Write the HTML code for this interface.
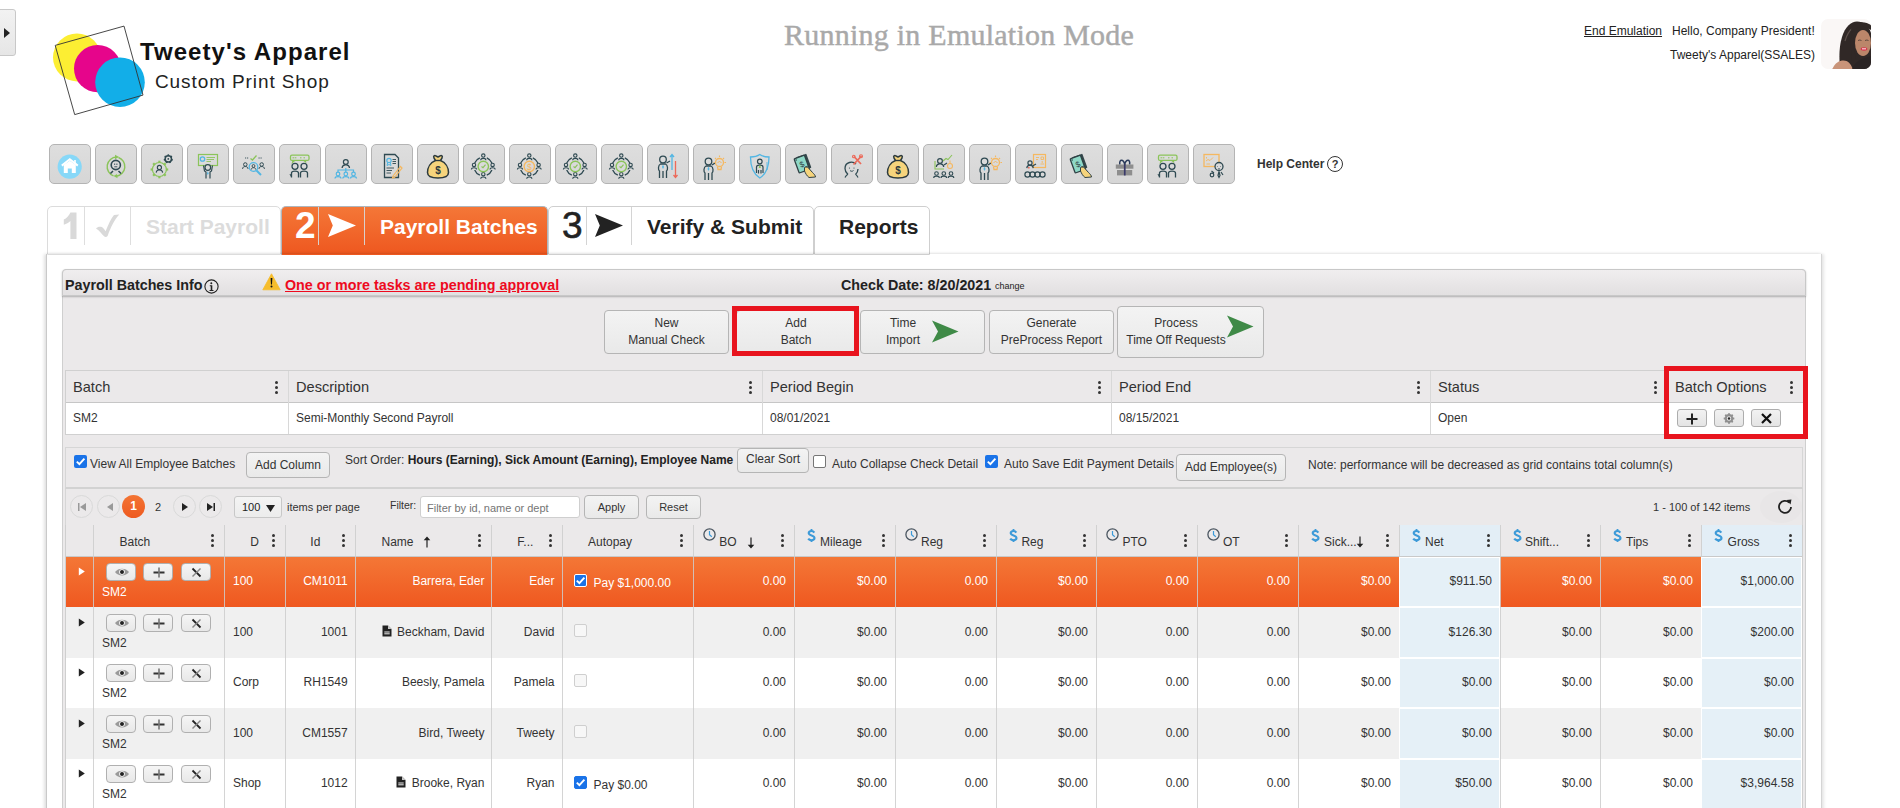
<!DOCTYPE html>
<html><head><meta charset="utf-8">
<style>
*{box-sizing:border-box;margin:0;padding:0}
html,body{width:1900px;height:808px;overflow:hidden;background:#fff;font-family:"Liberation Sans",sans-serif;color:#333;position:relative}
.a{position:absolute}
.t{white-space:nowrap;position:absolute}
/* toggle */
#tog{left:-3px;top:9px;width:19px;height:47px;border:1px solid #c8c8c8;border-radius:0 3px 3px 0;background:linear-gradient(#f2f2f2,#e6e6e6)}
#tog:after{content:"";position:absolute;left:6px;top:18px;border-left:6px solid #222;border-top:5px solid transparent;border-bottom:5px solid transparent}
/* icon bar */
.ib{position:absolute;top:144px;width:42px;height:40px;border:1px solid #b4b4b4;border-radius:5px;background:linear-gradient(#dedede,#d6d6d6)}

/* tabs */
.tab{position:absolute;top:206px;height:49px;border:1px solid #d0d0d0;border-radius:5px 5px 0 0;background:#fff}
.tab .sep{position:absolute;top:0;width:1px;height:38px;background:#d8d8d8}
/* container */
#cont{left:46px;top:254px;width:1776px;height:600px;border-left:1px solid #c9c9c9;border-right:1px solid #d5d5d5;box-shadow:-2px 0 3px rgba(0,0,0,.12),2px 0 3px rgba(0,0,0,.10)}
#panel{left:62px;top:269px;width:1744px;height:600px;background:#ebe9ea;border:1px solid #cfcfcf;border-radius:4px 4px 0 0}
#phead{left:62px;top:269px;width:1744px;height:27px;background:linear-gradient(#f0eeef,#e2e0e1);border:1px solid #c8c8c8;border-radius:4px 4px 0 0;box-shadow:0 1px 2px rgba(0,0,0,.25)}
.btn{position:absolute;border:1px solid #b5b5b5;border-radius:4px;background:linear-gradient(#f3f3f3,#e9e9e9);font-size:12px;color:#333;text-align:center;line-height:17px}
.grid{position:absolute;background:#fff;border:1px solid #cfcfcf}
.gh{position:absolute;background:#ebe9ea;border-bottom:1px solid #c4c4c4}
.kb{position:absolute;width:3px}
.kb i{display:block;width:3px;height:3px;border-radius:50%;background:#333;margin-bottom:2px}
</style></head><body>
<div id="tog" class="a"></div>

<!-- logo -->
<svg class="a" style="left:0;top:0" width="400" height="130" viewBox="0 0 400 130">
  <circle cx="77" cy="57.4" r="24" fill="#fcee33"/>
  <circle cx="97.6" cy="68.6" r="23.6" fill="#e6058b"/>
  <circle cx="120" cy="82.2" r="24.8" fill="#12aee8"/>
  <polygon points="55.2,45.4 124,26.1 143,95.1 74.7,114.6" fill="none" stroke="#333" stroke-width="0.9"/>
</svg>
<div class="t" style="left:140px;top:38px;font-size:24px;font-weight:bold;color:#111;letter-spacing:1.05px">Tweety's Apparel</div>
<div class="t" style="left:155px;top:71px;font-size:19px;color:#222;letter-spacing:0.9px">Custom Print Shop</div>

<div class="t" style="left:784px;top:18px;font-size:30px;font-family:'Liberation Serif',serif;color:#a9a9a9;letter-spacing:0.24px;-webkit-text-stroke:0.45px #a9a9a9">Running in Emulation Mode</div>

<div class="t" style="left:1584px;top:24px;font-size:12px;color:#222;text-decoration:underline">End Emulation</div>
<div class="t" style="left:1672px;top:24px;font-size:12px;color:#222">Hello, Company President!</div>
<div class="t" style="left:1670px;top:48px;font-size:12px;color:#222">Tweety's Apparel(SSALES)</div>
<svg class="a" style="left:1821px;top:19px" width="50" height="50" viewBox="0 0 50 50"><defs><clipPath id="avc"><rect x="0" y="0" width="50" height="50" rx="7"/></clipPath></defs><g clip-path="url(#avc)">
<rect width="50" height="50" fill="#faf7f6"/>
<path d="M19,50 C18,38 18,28 21,18 C24,8 30,2.5 36,2.5 C43,2.5 49,8 50.5,16 L50.5,50 Z" fill="#302826"/>
<path d="M24,22 C26,15 29,11 32,9" fill="none" stroke="#5a4e4a" stroke-width="1.2"/>
<ellipse cx="42" cy="24" rx="8" ry="13" fill="#bb866a"/>
<path d="M31,14 C34,7 44,5 51,12 L51,7 C45,1 33,2 30,10 Z" fill="#302826"/>
<path d="M31,12 C33,20 33,32 35,40 L31,42 C30,32 29,20 31,12 Z" fill="#302826"/>
<ellipse cx="43" cy="30" rx="3.3" ry="1.7" fill="#d8344c"/>
<rect x="41" y="29.4" width="4" height="0.9" fill="#fff"/>
<path d="M37,21.5 Q39,20.5 40.5,21.5 M44,21.5 Q46,20.5 47.5,21.5" fill="none" stroke="#4a3a34" stroke-width="0.8"/>
<path d="M11,50.5 C14,44 18,41.5 22.5,41.5 C27,41.5 30,45 32,50.5 Z" fill="#c99479"/>
<path d="M31,50.5 C33,44 38,40 50.5,37 L50.5,50.5 Z" fill="#2a2424"/>
</g></svg>

<!-- ICONS -->
<div id="icons">
<div class="ib" style="left:49px;width:42px"><svg class="a" style="left:-1px;top:-1px;overflow:visible" width="42" height="40" viewBox="0 0 42 40"><circle cx="20.7" cy="22.7" r="12.1" fill="#87d8f8"/><path d="M12.8,21.6 L20.8,15.3 L28.8,21.6" fill="none" stroke="#fff" stroke-width="2"/><path d="M14.8,21 L20.8,16.8 L26.8,21 L26.8,28.9 L22.8,28.9 L22.8,24.5 L18.8,24.5 L18.8,28.9 L14.8,28.9 Z" fill="#fff"/><rect x="25.2" y="16" width="1.6" height="3.5" fill="#fff"/></svg></div>
<div class="ib" style="left:95px;width:42px"><svg class="a" style="left:-1px;top:-1px;overflow:visible" width="42" height="40" viewBox="0 0 42 40"><path d="M21.5,13 A9.7,9.7 0 0 0 18.5,31.8" fill="none" stroke="#8bc45a" stroke-width="1.4"/><path d="M23.5,13.5 A9.7,9.7 0 0 1 21.5,32.2" fill="none" stroke="#8bc45a" stroke-width="1.4"/><path d="M20,10.8 L24,13 L20,15.2 Z" fill="#8bc45a"/><path d="M22,30 L18.5,32 L22.5,34.2 Z" fill="#8bc45a"/><circle cx="20.8" cy="21" r="4.6" fill="none" stroke="#2f4a52" stroke-width="1.6"/><path d="M15.5,29.5 L18,27 M26,29.5 L23.5,27" stroke="#2f4a52" stroke-width="1.5"/><path d="M19.7,19.5 V21 M21.9,19.5 V21 M19.3,22.8 H22.3" stroke="#2f4a52" stroke-width="0.9"/></svg></div>
<div class="ib" style="left:141px;width:42px"><svg class="a" style="left:-1px;top:-1px;overflow:visible" width="42" height="40" viewBox="0 0 42 40"><circle cx="18.4" cy="25.5" r="7" fill="none" stroke="#8bc45a" stroke-width="1.2"/><rect x="17.299999999999997" y="16.7" width="2.2" height="2.3" fill="#8bc45a" transform="rotate(0.0 18.4 25.5)"/><rect x="17.299999999999997" y="16.7" width="2.2" height="2.3" fill="#8bc45a" transform="rotate(45.0 18.4 25.5)"/><rect x="17.299999999999997" y="16.7" width="2.2" height="2.3" fill="#8bc45a" transform="rotate(90.0 18.4 25.5)"/><rect x="17.299999999999997" y="16.7" width="2.2" height="2.3" fill="#8bc45a" transform="rotate(135.0 18.4 25.5)"/><rect x="17.299999999999997" y="16.7" width="2.2" height="2.3" fill="#8bc45a" transform="rotate(180.0 18.4 25.5)"/><rect x="17.299999999999997" y="16.7" width="2.2" height="2.3" fill="#8bc45a" transform="rotate(225.0 18.4 25.5)"/><rect x="17.299999999999997" y="16.7" width="2.2" height="2.3" fill="#8bc45a" transform="rotate(270.0 18.4 25.5)"/><rect x="17.299999999999997" y="16.7" width="2.2" height="2.3" fill="#8bc45a" transform="rotate(315.0 18.4 25.5)"/><circle cx="27.3" cy="14.9" r="3.2" fill="none" stroke="#2f4a52" stroke-width="1.5"/><rect x="26.55" y="10.299999999999999" width="1.5" height="1.9" fill="#2f4a52" transform="rotate(0.0 27.3 14.9)"/><rect x="26.55" y="10.299999999999999" width="1.5" height="1.9" fill="#2f4a52" transform="rotate(51.42857142857143 27.3 14.9)"/><rect x="26.55" y="10.299999999999999" width="1.5" height="1.9" fill="#2f4a52" transform="rotate(102.85714285714286 27.3 14.9)"/><rect x="26.55" y="10.299999999999999" width="1.5" height="1.9" fill="#2f4a52" transform="rotate(154.28571428571428 27.3 14.9)"/><rect x="26.55" y="10.299999999999999" width="1.5" height="1.9" fill="#2f4a52" transform="rotate(205.71428571428572 27.3 14.9)"/><rect x="26.55" y="10.299999999999999" width="1.5" height="1.9" fill="#2f4a52" transform="rotate(257.14285714285717 27.3 14.9)"/><rect x="26.55" y="10.299999999999999" width="1.5" height="1.9" fill="#2f4a52" transform="rotate(308.57142857142856 27.3 14.9)"/><circle cx="27.3" cy="14.9" r="0.9" fill="#2f4a52"/><circle cx="18.4" cy="23.5" r="2.08" fill="none" stroke="#2f4a52" stroke-width="1.1"/><path d="M15.149999999999999,28.7 C15.474999999999998,26.425 16.775,25.775 18.4,25.97 C20.025,25.775 21.325,26.425 21.65,28.7" fill="none" stroke="#2f4a52" stroke-width="1.1"/></svg></div>
<div class="ib" style="left:187px;width:42px"><svg class="a" style="left:-1px;top:-1px;overflow:visible" width="42" height="40" viewBox="0 0 42 40"><rect x="11.5" y="10.5" width="19" height="11" fill="none" stroke="#8bc45a" stroke-width="1.2"/><circle cx="15.5" cy="15" r="2.2" fill="none" stroke="#52b6e3" stroke-width="1.3"/><path d="M19.5,13.5 H28 M19.5,15.5 H27 M19.5,17.5 H24" stroke="#8bc45a" stroke-width="0.9"/><circle cx="20.8" cy="23.5" r="2.8" fill="#d9d9d9" stroke="#2f4a52" stroke-width="1.2"/><path d="M16.5,21.5 L17.5,27 L19,28 L19,34.5 M23,34.5 L23,28 L24.5,27 L25.5,21.5" fill="none" stroke="#2f4a52" stroke-width="1.2"/><path d="M20.8,27 L21.6,29.5 L20.8,31 L20,29.5 Z" fill="#52b6e3"/></svg></div>
<div class="ib" style="left:233px;width:42px"><svg class="a" style="left:-1px;top:-1px;overflow:visible" width="42" height="40" viewBox="0 0 42 40"><path d="M12,14 H16 M25.5,14 H29.5" stroke="#2f4a52" stroke-width="0.9" stroke-dasharray="1.2 0.8"/><path d="M17.5,14.5 L19.5,16 L23.5,11.5" fill="none" stroke="#8bc45a" stroke-width="1.3"/><circle cx="12.3" cy="20.5" r="1.7600000000000002" fill="none" stroke="#2f4a52" stroke-width="1.0"/><path d="M9.55,24.9 C9.825000000000001,22.975 10.925,22.425 12.3,22.59 C13.675,22.425 14.775,22.975 15.05,24.9" fill="none" stroke="#2f4a52" stroke-width="1.0"/><circle cx="28.7" cy="20.5" r="1.7600000000000002" fill="none" stroke="#2f4a52" stroke-width="1.0"/><path d="M25.95,24.9 C26.224999999999998,22.975 27.325,22.425 28.7,22.59 C30.075,22.425 31.175,22.975 31.45,24.9" fill="none" stroke="#2f4a52" stroke-width="1.0"/><circle cx="20.5" cy="23" r="4.3" fill="none" stroke="#52b6e3" stroke-width="1.3"/><circle cx="20.5" cy="22" r="1.4400000000000002" fill="none" stroke="#2f4a52" stroke-width="0.9"/><path d="M18.25,25.6 C18.475,24.025 19.375,23.575 20.5,23.71 C21.625,23.575 22.525,24.025 22.75,25.6" fill="none" stroke="#2f4a52" stroke-width="0.9"/><path d="M23.5,26.5 L28,31" stroke="#52b6e3" stroke-width="2"/></svg></div>
<div class="ib" style="left:279px;width:42px"><svg class="a" style="left:-1px;top:-1px;overflow:visible" width="42" height="40" viewBox="0 0 42 40"><rect x="11.5" y="11.2" width="18.5" height="5.2" rx="1.5" fill="none" stroke="#8bc45a" stroke-width="1.3"/><path d="M14,16.4 L13.5,18.4 L16,16.4 M26,16.4 L27,18.4 L24.5,16.4" fill="none" stroke="#8bc45a" stroke-width="1.2"/><path d="M13.5,13.8 H18 M21,13.8 H23 M24.5,13.8 H26.5" stroke="#8bc45a" stroke-width="1" stroke-dasharray="1.5 0.6"/><circle cx="16" cy="22.3" r="3" fill="none" stroke="#2f4a52" stroke-width="1.3"/><circle cx="25" cy="22.3" r="3" fill="none" stroke="#2f4a52" stroke-width="1.3"/><path d="M12.5,33.5 V29 C12.5,26.5 19.5,26.5 19.5,29 V33.5 M21.5,33.5 V29 C21.5,26.5 28.5,26.5 28.5,29 V33.5" fill="none" stroke="#2f4a52" stroke-width="1.3"/><path d="M11,30 L12.5,33" stroke="#2f4a52" stroke-width="1"/></svg></div>
<div class="ib" style="left:325px;width:42px"><svg class="a" style="left:-1px;top:-1px;overflow:visible" width="42" height="40" viewBox="0 0 42 40"><circle cx="20.8" cy="18" r="2.4000000000000004" fill="none" stroke="#2f4a52" stroke-width="1.2"/><path d="M17.05,24.0 C17.425,21.375 18.925,20.625 20.8,20.85 C22.675,20.625 24.175,21.375 24.55,24.0" fill="none" stroke="#2f4a52" stroke-width="1.2"/><path d="M20.8,24 V25.5 M13,28 V26 H28.5 V28 M20.8,26 V28" fill="none" stroke="#52b6e3" stroke-width="1.2"/><circle cx="13" cy="30" r="1.8" fill="none" stroke="#52b6e3" stroke-width="1.2"/><path d="M10,34.5 C10,32 16,32 16,34.5" fill="none" stroke="#52b6e3" stroke-width="1.2"/><circle cx="20.8" cy="30" r="1.8" fill="none" stroke="#52b6e3" stroke-width="1.2"/><path d="M17.8,34.5 C17.8,32 23.8,32 23.8,34.5" fill="none" stroke="#52b6e3" stroke-width="1.2"/><circle cx="28.5" cy="30" r="1.8" fill="none" stroke="#52b6e3" stroke-width="1.2"/><path d="M25.5,34.5 C25.5,32 31.5,32 31.5,34.5" fill="none" stroke="#52b6e3" stroke-width="1.2"/></svg></div>
<div class="ib" style="left:371px;width:42px"><svg class="a" style="left:-1px;top:-1px;overflow:visible" width="42" height="40" viewBox="0 0 42 40"><path d="M13.5,10.5 H24 L27.5,14 V33.5 H13.5 Z" fill="none" stroke="#2f4a52" stroke-width="1.3"/><circle cx="18" cy="16.5" r="2.2" fill="none" stroke="#52b6e3" stroke-width="1.2"/><path d="M16.7,18.5 L16,21.5 L18,20.5 L20,21.5 L19.3,18.5" fill="none" stroke="#52b6e3" stroke-width="1"/><path d="M21.5,15.5 H25 M21.5,17.5 H25 M21.5,19.5 H25 M15.5,24 H23 M15.5,26.5 H21 M15.5,29 H20" stroke="#2f4a52" stroke-width="0.9"/><path d="M22,32 L29.5,22.5 L31,24 L23.5,33.5 L21.5,34 Z" fill="none" stroke="#f5b860" stroke-width="1.2"/></svg></div>
<div class="ib" style="left:417px;width:42px"><svg class="a" style="left:-1px;top:-1px;overflow:visible" width="42" height="40" viewBox="0 0 42 40"><g transform="translate(0.5 1.5)"><path d="M16.5,12.5 C15.5,10.5 17,9.5 18.5,10.5 L20.5,11.5 L22.5,10.5 C24,9.5 25.5,10.5 24.5,12.5 L23,15 C28,17 31,22 31,27 C31,31 27,32.5 20.5,32.5 C14,32.5 10,31 10,27 C10,22 13,17 18,15 Z" fill="#f6d47c" stroke="#2c3a3e" stroke-width="1.5" stroke-linejoin="round"/><path d="M18,15 L23,15" stroke="#2c3a3e" stroke-width="1.4"/><text x="20.5" y="28.5" font-family="Liberation Sans" font-weight="bold" font-size="10" text-anchor="middle" fill="#2c3a3e">$</text></g></svg></div>
<div class="ib" style="left:463px;width:42px"><svg class="a" style="left:-1px;top:-1px;overflow:visible" width="42" height="40" viewBox="0 0 42 40"><path d="M28.92,25.98 A9.3,9.3 0 0 1 23.78,31.12" fill="none" stroke="#2f4a52" stroke-width="1.3"/><path d="M16.82,31.12 A9.3,9.3 0 0 1 11.68,25.98" fill="none" stroke="#2f4a52" stroke-width="1.3"/><path d="M11.68,19.02 A9.3,9.3 0 0 1 16.82,13.88" fill="none" stroke="#2f4a52" stroke-width="1.3"/><path d="M23.78,13.88 A9.3,9.3 0 0 1 28.92,19.02" fill="none" stroke="#2f4a52" stroke-width="1.3"/><circle cx="20.3" cy="11.6" r="1.7" fill="#d9d9d9" stroke="#2f4a52" stroke-width="1.1"/><path d="M17.7,16.2 C17.900000000000002,13.799999999999999 22.7,13.799999999999999 22.900000000000002,16.2" fill="#d9d9d9" stroke="#2f4a52" stroke-width="1.1"/><circle cx="20.3" cy="30.2" r="1.7" fill="#d9d9d9" stroke="#2f4a52" stroke-width="1.1"/><path d="M17.7,34.8 C17.900000000000002,32.4 22.7,32.4 22.900000000000002,34.8" fill="#d9d9d9" stroke="#2f4a52" stroke-width="1.1"/><circle cx="11.0" cy="20.9" r="1.7" fill="#d9d9d9" stroke="#2f4a52" stroke-width="1.1"/><path d="M8.4,25.5 C8.6,23.1 13.4,23.1 13.6,25.5" fill="#d9d9d9" stroke="#2f4a52" stroke-width="1.1"/><circle cx="29.6" cy="20.9" r="1.7" fill="#d9d9d9" stroke="#2f4a52" stroke-width="1.1"/><path d="M27.0,25.5 C27.200000000000003,23.1 32.0,23.1 32.2,25.5" fill="#d9d9d9" stroke="#2f4a52" stroke-width="1.1"/><circle cx="20.3" cy="22.5" r="5.2" fill="none" stroke="#8bc45a" stroke-width="1.4"/><path d="M18.5,22.5 L20.0,23.7 L22.5,20.7" fill="none" stroke="#8bc45a" stroke-width="1.2"/></svg></div>
<div class="ib" style="left:509px;width:42px"><svg class="a" style="left:-1px;top:-1px;overflow:visible" width="42" height="40" viewBox="0 0 42 40"><path d="M28.92,25.98 A9.3,9.3 0 0 1 23.78,31.12" fill="none" stroke="#2f4a52" stroke-width="1.3"/><path d="M16.82,31.12 A9.3,9.3 0 0 1 11.68,25.98" fill="none" stroke="#2f4a52" stroke-width="1.3"/><path d="M11.68,19.02 A9.3,9.3 0 0 1 16.82,13.88" fill="none" stroke="#2f4a52" stroke-width="1.3"/><path d="M23.78,13.88 A9.3,9.3 0 0 1 28.92,19.02" fill="none" stroke="#2f4a52" stroke-width="1.3"/><circle cx="20.3" cy="11.6" r="1.7" fill="#d9d9d9" stroke="#2f4a52" stroke-width="1.1"/><path d="M17.7,16.2 C17.900000000000002,13.799999999999999 22.7,13.799999999999999 22.900000000000002,16.2" fill="#d9d9d9" stroke="#2f4a52" stroke-width="1.1"/><circle cx="20.3" cy="30.2" r="1.7" fill="#d9d9d9" stroke="#2f4a52" stroke-width="1.1"/><path d="M17.7,34.8 C17.900000000000002,32.4 22.7,32.4 22.900000000000002,34.8" fill="#d9d9d9" stroke="#2f4a52" stroke-width="1.1"/><circle cx="11.0" cy="20.9" r="1.7" fill="#d9d9d9" stroke="#2f4a52" stroke-width="1.1"/><path d="M8.4,25.5 C8.6,23.1 13.4,23.1 13.6,25.5" fill="#d9d9d9" stroke="#2f4a52" stroke-width="1.1"/><circle cx="29.6" cy="20.9" r="1.7" fill="#d9d9d9" stroke="#2f4a52" stroke-width="1.1"/><path d="M27.0,25.5 C27.200000000000003,23.1 32.0,23.1 32.2,25.5" fill="#d9d9d9" stroke="#2f4a52" stroke-width="1.1"/><circle cx="20.3" cy="22.5" r="5.2" fill="none" stroke="#f5b860" stroke-width="1.4"/><text x="20.3" y="25.7" font-family="Liberation Sans" font-size="8.5" text-anchor="middle" fill="#f5b860">$</text></svg></div>
<div class="ib" style="left:555px;width:42px"><svg class="a" style="left:-1px;top:-1px;overflow:visible" width="42" height="40" viewBox="0 0 42 40"><path d="M28.92,25.98 A9.3,9.3 0 0 1 23.78,31.12" fill="none" stroke="#2f4a52" stroke-width="1.3"/><path d="M16.82,31.12 A9.3,9.3 0 0 1 11.68,25.98" fill="none" stroke="#2f4a52" stroke-width="1.3"/><path d="M11.68,19.02 A9.3,9.3 0 0 1 16.82,13.88" fill="none" stroke="#2f4a52" stroke-width="1.3"/><path d="M23.78,13.88 A9.3,9.3 0 0 1 28.92,19.02" fill="none" stroke="#2f4a52" stroke-width="1.3"/><circle cx="20.3" cy="11.6" r="1.7" fill="#d9d9d9" stroke="#2f4a52" stroke-width="1.1"/><path d="M17.7,16.2 C17.900000000000002,13.799999999999999 22.7,13.799999999999999 22.900000000000002,16.2" fill="#d9d9d9" stroke="#2f4a52" stroke-width="1.1"/><circle cx="20.3" cy="30.2" r="1.7" fill="#d9d9d9" stroke="#2f4a52" stroke-width="1.1"/><path d="M17.7,34.8 C17.900000000000002,32.4 22.7,32.4 22.900000000000002,34.8" fill="#d9d9d9" stroke="#2f4a52" stroke-width="1.1"/><circle cx="11.0" cy="20.9" r="1.7" fill="#d9d9d9" stroke="#2f4a52" stroke-width="1.1"/><path d="M8.4,25.5 C8.6,23.1 13.4,23.1 13.6,25.5" fill="#d9d9d9" stroke="#2f4a52" stroke-width="1.1"/><circle cx="29.6" cy="20.9" r="1.7" fill="#d9d9d9" stroke="#2f4a52" stroke-width="1.1"/><path d="M27.0,25.5 C27.200000000000003,23.1 32.0,23.1 32.2,25.5" fill="#d9d9d9" stroke="#2f4a52" stroke-width="1.1"/><circle cx="20.3" cy="22.5" r="5.2" fill="none" stroke="#8bc45a" stroke-width="1.4"/><path d="M18.5,22.5 L20.0,23.7 L22.5,20.7" fill="none" stroke="#8bc45a" stroke-width="1.2"/></svg></div>
<div class="ib" style="left:601px;width:42px"><svg class="a" style="left:-1px;top:-1px;overflow:visible" width="42" height="40" viewBox="0 0 42 40"><path d="M28.92,25.98 A9.3,9.3 0 0 1 23.78,31.12" fill="none" stroke="#2f4a52" stroke-width="1.3"/><path d="M16.82,31.12 A9.3,9.3 0 0 1 11.68,25.98" fill="none" stroke="#2f4a52" stroke-width="1.3"/><path d="M11.68,19.02 A9.3,9.3 0 0 1 16.82,13.88" fill="none" stroke="#2f4a52" stroke-width="1.3"/><path d="M23.78,13.88 A9.3,9.3 0 0 1 28.92,19.02" fill="none" stroke="#2f4a52" stroke-width="1.3"/><circle cx="20.3" cy="11.6" r="1.7" fill="#d9d9d9" stroke="#2f4a52" stroke-width="1.1"/><path d="M17.7,16.2 C17.900000000000002,13.799999999999999 22.7,13.799999999999999 22.900000000000002,16.2" fill="#d9d9d9" stroke="#2f4a52" stroke-width="1.1"/><circle cx="20.3" cy="30.2" r="1.7" fill="#d9d9d9" stroke="#2f4a52" stroke-width="1.1"/><path d="M17.7,34.8 C17.900000000000002,32.4 22.7,32.4 22.900000000000002,34.8" fill="#d9d9d9" stroke="#2f4a52" stroke-width="1.1"/><circle cx="11.0" cy="20.9" r="1.7" fill="#d9d9d9" stroke="#2f4a52" stroke-width="1.1"/><path d="M8.4,25.5 C8.6,23.1 13.4,23.1 13.6,25.5" fill="#d9d9d9" stroke="#2f4a52" stroke-width="1.1"/><circle cx="29.6" cy="20.9" r="1.7" fill="#d9d9d9" stroke="#2f4a52" stroke-width="1.1"/><path d="M27.0,25.5 C27.200000000000003,23.1 32.0,23.1 32.2,25.5" fill="#d9d9d9" stroke="#2f4a52" stroke-width="1.1"/><circle cx="20.3" cy="22.5" r="5.2" fill="none" stroke="#8bc45a" stroke-width="1.4"/><path d="M18.5,22.5 L20.0,23.7 L22.5,20.7" fill="none" stroke="#8bc45a" stroke-width="1.2"/></svg></div>
<div class="ib" style="left:647px;width:42px"><svg class="a" style="left:-1px;top:-1px;overflow:visible" width="42" height="40" viewBox="0 0 42 40"><circle cx="16" cy="15.5" r="3.3" fill="none" stroke="#2f4a52" stroke-width="1.3"/><path d="M12.5,34 L12.5,27 C11,26 11,21 13.5,20 L18.5,20 C21,21 21,26 19.5,27 L19.5,34 M16,27 L16,34" fill="none" stroke="#2f4a52" stroke-width="1.3"/><path d="M16,20.5 L17,23 L16,25 L15,23 Z" fill="#52b6e3"/><path d="M19.5,19 L23,17" stroke="#2f4a52" stroke-width="1.3"/><path d="M25,26 V11 M23,13 L25,10.5 L27,13" fill="none" stroke="#52b6e3" stroke-width="1.3"/><path d="M28.5,17 V33 M26.5,31 L28.5,33.5 L30.5,31" fill="none" stroke="#ec6a5a" stroke-width="1.3"/></svg></div>
<div class="ib" style="left:693px;width:42px"><svg class="a" style="left:-1px;top:-1px;overflow:visible" width="42" height="40" viewBox="0 0 42 40"><circle cx="15.5" cy="17.5" r="3.3" fill="none" stroke="#2f4a52" stroke-width="1.3"/><path d="M12.0,36 L12.0,29 C10.5,28 10.5,23 13.0,22 L18.0,22 C20.5,23 20.5,28 19.0,29 L19.0,36 M15.5,29 L15.5,36" fill="none" stroke="#2f4a52" stroke-width="1.3"/><path d="M15.5,22.5 L16.5,25 L15.5,27 L14.5,25 Z" fill="#52b6e3"/><path d="M19,21 L22,19" stroke="#2f4a52" stroke-width="1.3"/><circle cx="26.5" cy="18.5" r="4" fill="none" stroke="#f5b860" stroke-width="1.3"/><path d="M24.5,22.5 L25.0,25.5 L28.0,25.5 L28.5,22.5" fill="none" stroke="#f5b860" stroke-width="1.3"/><path d="M26.5,11.5 V13.0 M20.5,18.5 H21.5 M31.5,18.5 H33.0 M22.0,14.0 L23.0,15.0 M31.0,14.0 L30.0,15.0" stroke="#f5b860" stroke-width="1.1"/><path d="M24.7,19.0 C25.5,17.0 27.5,17.0 28.3,19.0" fill="none" stroke="#f5b860" stroke-width="1"/></svg></div>
<div class="ib" style="left:739px;width:42px"><svg class="a" style="left:-1px;top:-1px;overflow:visible" width="42" height="40" viewBox="0 0 42 40"><path d="M20.8,10.5 C23.5,12.5 26.5,13 30,13 C30,23 27,30 20.8,34 C14.5,30 11.5,23 11.5,13 C15,13 18,12.5 20.8,10.5 Z" fill="none" stroke="#52b6e3" stroke-width="1.3"/><path d="M28,18 V26" stroke="#52b6e3" stroke-width="0.8"/><circle cx="20.8" cy="17.5" r="2.3" fill="none" stroke="#2f4a52" stroke-width="1.2"/><path d="M17.5,29 V23 C17.5,20.5 24,20.5 24,23 V29 M19.5,29.5 V26 M22,29.5 V26" fill="none" stroke="#2f4a52" stroke-width="1.2"/><path d="M20.2,21.5 H21.4 L21.8,24 H19.8 Z" fill="#8bc45a"/></svg></div>
<div class="ib" style="left:785px;width:42px"><svg class="a" style="left:-1px;top:-1px;overflow:visible" width="42" height="40" viewBox="0 0 42 40"><g transform="rotate(-20 17.6 19.6)"><rect x="13.5" y="11.5" width="11" height="15" rx="0.8" fill="#34474b"/><rect x="11.2" y="12.3" width="11" height="15" rx="0.8" fill="#8ed8c6" stroke="#2f4044" stroke-width="1.3"/><circle cx="12.8" cy="14" r="0.7" fill="#2f4044"/><circle cx="20.6" cy="25.6" r="0.7" fill="#2f4044"/><text x="16.7" y="23" font-family="Liberation Sans" font-size="8" text-anchor="middle" fill="#2f4044">$</text></g><path d="M19.5,23.5 C20.5,22 22.5,22.5 23.5,24 L27.5,28.5 C29,30 30.5,31.5 30.5,33 L24,33.5 C22,32 20.5,29.5 19.5,27 Z" fill="#f6d47c" stroke="#2f4044" stroke-width="1"/><path d="M20.5,24 L23,21.5" stroke="#2f4044" stroke-width="1"/></svg></div>
<div class="ib" style="left:831px;width:42px"><svg class="a" style="left:-1px;top:-1px;overflow:visible" width="42" height="40" viewBox="0 0 42 40"><path d="M25,20 C22,17 14,17.5 14,24.5 C14,28 16.5,30 17,30.5 M24.5,30.5 C26,29 27,27 27,25" fill="none" stroke="#2f4a52" stroke-width="1.3"/><path d="M14,33.5 C15,31.5 16.5,30.5 17,30.5 M27,33.5 C26,31.5 25,30.5 24.5,30.5" fill="none" stroke="#2f4a52" stroke-width="1.2"/><circle cx="18.5" cy="24" r="0.6" fill="#2f4a52"/><circle cx="23" cy="24" r="0.6" fill="#2f4a52"/><path d="M19,26.5 C20,27.5 21.5,27.5 22.5,26.5" fill="none" stroke="#2f4a52" stroke-width="1"/><path d="M22.5,20.5 L30.5,12 M23,12.5 L30,20" stroke="#ec6a5a" stroke-width="1.8"/><circle cx="30" cy="12.2" r="1.5" fill="none" stroke="#ec6a5a" stroke-width="1.1"/><circle cx="22.8" cy="12.5" r="1.3" fill="none" stroke="#ec6a5a" stroke-width="1.1"/></svg></div>
<div class="ib" style="left:877px;width:42px"><svg class="a" style="left:-1px;top:-1px;overflow:visible" width="42" height="40" viewBox="0 0 42 40"><g transform="translate(0.5 1.5)"><path d="M16.5,12.5 C15.5,10.5 17,9.5 18.5,10.5 L20.5,11.5 L22.5,10.5 C24,9.5 25.5,10.5 24.5,12.5 L23,15 C28,17 31,22 31,27 C31,31 27,32.5 20.5,32.5 C14,32.5 10,31 10,27 C10,22 13,17 18,15 Z" fill="#f6d47c" stroke="#2c3a3e" stroke-width="1.5" stroke-linejoin="round"/><path d="M18,15 L23,15" stroke="#2c3a3e" stroke-width="1.4"/><text x="20.5" y="28.5" font-family="Liberation Sans" font-weight="bold" font-size="10" text-anchor="middle" fill="#2c3a3e">$</text></g></svg></div>
<div class="ib" style="left:923px;width:42px"><svg class="a" style="left:-1px;top:-1px;overflow:visible" width="42" height="40" viewBox="0 0 42 40"><circle cx="17" cy="17" r="2.4000000000000004" fill="none" stroke="#2f4a52" stroke-width="1.2"/><path d="M13.25,23.0 C13.625,20.375 15.125,19.625 17,19.85 C18.875,19.625 20.375,20.375 20.75,23.0" fill="none" stroke="#2f4a52" stroke-width="1.2"/><path d="M12,17 V25 H21" fill="none" stroke="#8bc45a" stroke-width="1.1"/><path d="M20,17 L23,14.5 L25,15.5 L29,11" fill="none" stroke="#8bc45a" stroke-width="1.1"/><circle cx="27" cy="22" r="2.5" fill="none" stroke="#f5b860" stroke-width="1.1"/><path d="M27,16.5 V19" stroke="#f5b860" stroke-width="1"/><path d="M21,21 L24,19" stroke="#2f4a52" stroke-width="1.2"/><circle cx="13.5" cy="29.5" r="1.8" fill="none" stroke="#2f4a52" stroke-width="1.1"/><path d="M10.7,34 C10.7,31.5 16.3,31.5 16.3,34" fill="none" stroke="#2f4a52" stroke-width="1.1"/><circle cx="20.8" cy="29.5" r="1.8" fill="none" stroke="#2f4a52" stroke-width="1.1"/><path d="M18.0,34 C18.0,31.5 23.6,31.5 23.6,34" fill="none" stroke="#2f4a52" stroke-width="1.1"/><circle cx="28" cy="29.5" r="1.8" fill="none" stroke="#2f4a52" stroke-width="1.1"/><path d="M25.2,34 C25.2,31.5 30.8,31.5 30.8,34" fill="none" stroke="#2f4a52" stroke-width="1.1"/></svg></div>
<div class="ib" style="left:969px;width:42px"><svg class="a" style="left:-1px;top:-1px;overflow:visible" width="42" height="40" viewBox="0 0 42 40"><circle cx="15.5" cy="17.5" r="3.3" fill="none" stroke="#2f4a52" stroke-width="1.3"/><path d="M12.0,36 L12.0,29 C10.5,28 10.5,23 13.0,22 L18.0,22 C20.5,23 20.5,28 19.0,29 L19.0,36 M15.5,29 L15.5,36" fill="none" stroke="#2f4a52" stroke-width="1.3"/><path d="M15.5,22.5 L16.5,25 L15.5,27 L14.5,25 Z" fill="#52b6e3"/><path d="M19,21 L22,19" stroke="#2f4a52" stroke-width="1.3"/><circle cx="26.5" cy="18.5" r="4" fill="none" stroke="#f5b860" stroke-width="1.3"/><path d="M24.5,22.5 L25.0,25.5 L28.0,25.5 L28.5,22.5" fill="none" stroke="#f5b860" stroke-width="1.3"/><path d="M26.5,11.5 V13.0 M20.5,18.5 H21.5 M31.5,18.5 H33.0 M22.0,14.0 L23.0,15.0 M31.0,14.0 L30.0,15.0" stroke="#f5b860" stroke-width="1.1"/><path d="M24.7,19.0 C25.5,17.0 27.5,17.0 28.3,19.0" fill="none" stroke="#f5b860" stroke-width="1"/></svg></div>
<div class="ib" style="left:1015px;width:42px"><svg class="a" style="left:-1px;top:-1px;overflow:visible" width="42" height="40" viewBox="0 0 42 40"><rect x="18.5" y="10.5" width="12" height="13" fill="none" stroke="#f5b860" stroke-width="1.2"/><path d="M21,13.5 H24 M21,15.5 H23 M26,13 H28.5 V15.5 H26 Z M27.2,17 V19 M25.5,20 H29" fill="none" stroke="#f5b860" stroke-width="0.9"/><circle cx="15" cy="19" r="2.08" fill="none" stroke="#2f4a52" stroke-width="1.2"/><path d="M11.75,24.2 C12.075,21.925 13.375,21.275 15,21.47 C16.625,21.275 17.925,21.925 18.25,24.2" fill="none" stroke="#2f4a52" stroke-width="1.2"/><path d="M13.8,23 L13.8,24.5" stroke="#ec6a5a" stroke-width="1.6"/><path d="M17.5,22 L21,20" stroke="#2f4a52" stroke-width="1.2"/><circle cx="12.5" cy="30.5" r="2.6" fill="none" stroke="#2f4a52" stroke-width="1.2"/><circle cx="17.5" cy="30.5" r="2.6" fill="none" stroke="#2f4a52" stroke-width="1.2"/><circle cx="22.5" cy="30.5" r="2.6" fill="none" stroke="#2f4a52" stroke-width="1.2"/><circle cx="27.5" cy="30.5" r="2.6" fill="none" stroke="#2f4a52" stroke-width="1.2"/></svg></div>
<div class="ib" style="left:1061px;width:42px"><svg class="a" style="left:-1px;top:-1px;overflow:visible" width="42" height="40" viewBox="0 0 42 40"><g transform="rotate(-20 17.6 19.6)"><rect x="13.5" y="11.5" width="11" height="15" rx="0.8" fill="#34474b"/><rect x="11.2" y="12.3" width="11" height="15" rx="0.8" fill="#8ed8c6" stroke="#2f4044" stroke-width="1.3"/><circle cx="12.8" cy="14" r="0.7" fill="#2f4044"/><circle cx="20.6" cy="25.6" r="0.7" fill="#2f4044"/><text x="16.7" y="23" font-family="Liberation Sans" font-size="8" text-anchor="middle" fill="#2f4044">$</text></g><path d="M19.5,23.5 C20.5,22 22.5,22.5 23.5,24 L27.5,28.5 C29,30 30.5,31.5 30.5,33 L24,33.5 C22,32 20.5,29.5 19.5,27 Z" fill="#f6d47c" stroke="#2f4044" stroke-width="1"/><path d="M20.5,24 L23,21.5" stroke="#2f4044" stroke-width="1"/></svg></div>
<div class="ib" style="left:1107px;width:36px"><svg class="a" style="left:-1px;top:-1px;overflow:visible" width="36" height="40" viewBox="0 0 36 40"><rect x="8.8" y="20.5" width="17.6" height="4.2" fill="#8e8e8e"/><rect x="10" y="26" width="15.2" height="5.4" fill="#8e8e8e"/><rect x="16.9" y="20" width="1.7" height="11.5" fill="#3a3a6a"/><path d="M17.7,20.3 C16.5,15 12,14.8 12.8,20.3 M17.7,20.3 C19,15 23.5,14.8 22.6,20.3" fill="none" stroke="#2a3a5a" stroke-width="1.5"/></svg></div>
<div class="ib" style="left:1147px;width:42px"><svg class="a" style="left:-1px;top:-1px;overflow:visible" width="42" height="40" viewBox="0 0 42 40"><rect x="11.5" y="11.2" width="18.5" height="5.2" rx="1.5" fill="none" stroke="#8bc45a" stroke-width="1.3"/><path d="M14,16.4 L13.5,18.4 L16,16.4 M26,16.4 L27,18.4 L24.5,16.4" fill="none" stroke="#8bc45a" stroke-width="1.2"/><path d="M13.5,13.8 H18 M21,13.8 H23 M24.5,13.8 H26.5" stroke="#8bc45a" stroke-width="1" stroke-dasharray="1.5 0.6"/><circle cx="16" cy="22.3" r="3" fill="none" stroke="#2f4a52" stroke-width="1.3"/><circle cx="25" cy="22.3" r="3" fill="none" stroke="#2f4a52" stroke-width="1.3"/><path d="M12.5,33.5 V29 C12.5,26.5 19.5,26.5 19.5,29 V33.5 M21.5,33.5 V29 C21.5,26.5 28.5,26.5 28.5,29 V33.5" fill="none" stroke="#2f4a52" stroke-width="1.3"/><path d="M11,30 L12.5,33" stroke="#2f4a52" stroke-width="1"/></svg></div>
<div class="ib" style="left:1193px;width:42px"><svg class="a" style="left:-1px;top:-1px;overflow:visible" width="42" height="40" viewBox="0 0 42 40"><rect x="11" y="10.5" width="15" height="12" fill="none" stroke="#f5b860" stroke-width="1.3"/><path d="M13,17 L15,15.5 L17,16.5 L20,13.5 M13.5,13 V14.5 M13.5,20 H17" fill="none" stroke="#f5b860" stroke-width="0.9"/><circle cx="26" cy="22.5" r="4" fill="#d9d9d9" stroke="#2f4a52" stroke-width="1.3"/><path d="M24.5,22.5 H25 M27,22.5 H27.5 M25,24.5 C25.5,25 26.5,25 27,24.5" stroke="#2f4a52" stroke-width="0.9" fill="none"/><path d="M21,29 L18.5,27 M30,31 L28,28 M26,27.5 L25,31.5 L26,33.5 L27,31.5 Z" fill="none" stroke="#2f4a52" stroke-width="1.2"/><circle cx="19" cy="31" r="1.8" fill="none" stroke="#2f4a52" stroke-width="1.2"/></svg></div>

</div>


<div class="t" style="left:1257px;top:157px;font-size:12px;font-weight:bold;color:#333">Help Center</div>
<div class="a" style="left:1327px;top:156px;width:16px;height:16px;border:1.3px solid #333;border-radius:50%;font-size:11px;font-weight:bold;text-align:center;line-height:14px;color:#333">?</div>

<!-- TABS -->

<div class="tab" style="left:47px;width:234px;border-color:#dcdcdc">
  <svg class="a" style="left:0;top:0" width="36" height="40" viewBox="0 0 36 40"><path d="M22.4,5.6 L28.5,5.6 L28.5,32 L22.4,32 L22.4,14 C20.5,15.8 18.5,17 15.8,17.8 L15.8,12.5 C18.5,11.5 21,9 22.4,5.6 Z" fill="#d9d9d9"/></svg>
  <div class="sep" style="left:36px;background:#dedede"></div>
  <svg class="a" style="left:48px;top:7px" width="24" height="24" viewBox="0 0 24 24"><path d="M0,14.5 C1.5,12.8 4,12.2 6.2,13.2 C7.5,14 8.5,15.5 9.6,17.2 C12.5,10 15,4.5 18,0.9 L23.3,0.4 C18.5,5.5 14.5,13.5 11.8,21.5 C11.2,23 9.5,23.4 8.3,22.6 C6,20.5 3.5,16.5 0,14.5 Z" fill="#d9d9d9"/></svg>
  <div class="sep" style="left:82px;background:#dedede"></div>
  <div class="t" style="left:98px;top:8px;font-size:21px;font-weight:bold;color:#dcdcdc">Start Payroll</div>
</div>
<div class="tab" style="left:281px;width:267px;border-color:#aeb6bd;border-bottom:none;background:linear-gradient(#f47737,#ee571f)">
  <div class="t" style="left:13px;top:-2px;font-size:37px;font-weight:bold;color:#fff">2</div>
  <div class="sep" style="left:36px;background:#d9d0cc"></div>
  <svg class="a" style="left:46px;top:7px" width="29" height="23" viewBox="0 0 29 23"><path d="M0,0 L28,11.5 L0,23 L4.8,11.5 Z" fill="#fff"/></svg>
  <div class="sep" style="left:82px;background:#d9d0cc"></div>
  <div class="t" style="left:98px;top:8px;font-size:21px;font-weight:bold;color:#fff">Payroll Batches</div>
</div>
<div class="tab" style="left:548px;width:266px;border-color:#cfcfcf">
  <div class="t" style="left:13px;top:-2px;font-size:37px;color:#222;-webkit-text-stroke:0.6px #222">3</div>
  <div class="sep" style="left:37px;background:#d4d4d4"></div>
  <svg class="a" style="left:46px;top:7px" width="29" height="23" viewBox="0 0 29 23"><path d="M0,0 L28,11.5 L0,23 L4.8,11.5 Z" fill="#222"/></svg>
  <div class="sep" style="left:82px;background:#d4d4d4"></div>
  <div class="t" style="left:98px;top:8px;font-size:21px;font-weight:bold;color:#222">Verify &amp; Submit</div>
</div>
<div class="tab" style="left:814px;width:116px;border-color:#cfcfcf">
  <div class="t" style="left:24px;top:8px;font-size:21px;font-weight:bold;color:#222">Reports</div>
</div>


<div id="cont" class="a"></div>
<div id="panel" class="a"></div>
<div id="phead" class="a"></div>

<div class="t" style="left:65px;top:277px;font-size:14.3px;font-weight:bold;color:#222">Payroll Batches Info</div>
<svg class="a" style="left:204px;top:279px" width="15" height="15" viewBox="0 0 15 15"><circle cx="7.5" cy="7.5" r="6.6" fill="none" stroke="#222" stroke-width="1.1"/><circle cx="7.3" cy="4.2" r="1" fill="#222"/><path d="M5.8,6.3 L8.3,6.3 L8.3,11 L9.5,11 L9.5,11.9 L5.5,11.9 L5.5,11 L6.7,11 L6.7,7.2 L5.8,7.2 Z" fill="#222"/></svg>
<svg class="a" style="left:262px;top:273px" width="19" height="18" viewBox="0 0 19 18"><path d="M9.5,0.8 L18.2,16.8 L0.8,16.8 Z" fill="#f6bd2c" stroke="#f6bd2c" stroke-width="0.8" stroke-linejoin="round"/><path d="M8.6,5 L10.4,5 L10,11.5 L9,11.5 Z" fill="#111"/><circle cx="9.5" cy="13.5" r="1" fill="#111"/></svg>
<div class="t" style="left:285px;top:277px;font-size:14.3px;font-weight:bold;color:#ee0a1e;text-decoration:underline">One or more tasks are pending approval</div>
<div class="t" style="left:841px;top:277px;font-size:14.3px;font-weight:bold;color:#222">Check Date: 8/20/2021</div>
<div class="t" style="left:995px;top:281px;font-size:9px;color:#222">change</div>

<div class="btn" style="left:604px;top:310px;width:125px;height:44px;padding-top:4px">New<br>Manual Check</div>
<div class="btn" style="left:736px;top:310px;width:120px;height:44px;padding-top:4px;border-color:#bbb">Add<br>Batch</div>
<div class="a" style="left:732px;top:306px;width:127px;height:50px;border:5px solid #e8141e"></div>
<div class="btn" style="left:860px;top:310px;width:125px;height:44px;padding-top:4px"><span style="position:absolute;left:25px;top:4px">Time<br>Import</span>
<svg class="a" style="left:71px;top:9px" width="27" height="23" viewBox="0 0 27 23"><path d="M0,0.5 L26.5,11.5 L0,22.5 L6,11.5 Z" fill="#3f8a47"/></svg></div>
<div class="btn" style="left:989px;top:310px;width:125px;height:44px;padding-top:4px">Generate<br>PreProcess Report</div>
<div class="btn" style="left:1117px;top:306px;width:147px;height:52px;padding-top:8px"><span style="position:absolute;left:8px;top:8px;width:100px;text-align:center">Process<br>Time Off Requests</span>
<svg class="a" style="left:109px;top:8px" width="27" height="23" viewBox="0 0 27 23"><path d="M0,0.5 L26.5,11.5 L0,22.5 L6,11.5 Z" fill="#3f8a47"/></svg></div>

<div class="grid" style="left:65px;top:370px;width:1740px;height:65px;border-color:#d0d0d0"></div>
<div class="a" style="left:66px;top:371px;width:1738px;height:32px;background:#ebe9ea;border-bottom:1px solid #c6c6c6"></div>
<div class="t" style="left:73px;top:379px;font-size:14.6px;color:#333;letter-spacing:0px">Batch</div>
<div class="kb" style="left:275px;top:381px"><i style="background:#333"></i><i style="background:#333"></i><i style="background:#333"></i></div>
<div class="t" style="left:73px;top:411px;font-size:12px;color:#333">SM2</div>
<div class="a" style="left:288px;top:371px;width:1px;height:63px;background:#d8d8d8"></div>
<div class="t" style="left:296px;top:379px;font-size:14.6px;color:#333;letter-spacing:0px">Description</div>
<div class="kb" style="left:749px;top:381px"><i style="background:#333"></i><i style="background:#333"></i><i style="background:#333"></i></div>
<div class="t" style="left:296px;top:411px;font-size:12px;color:#333">Semi-Monthly Second Payroll</div>
<div class="a" style="left:762px;top:371px;width:1px;height:63px;background:#d8d8d8"></div>
<div class="t" style="left:770px;top:379px;font-size:14.6px;color:#333;letter-spacing:0px">Period Begin</div>
<div class="kb" style="left:1098px;top:381px"><i style="background:#333"></i><i style="background:#333"></i><i style="background:#333"></i></div>
<div class="t" style="left:770px;top:411px;font-size:12px;color:#333">08/01/2021</div>
<div class="a" style="left:1111px;top:371px;width:1px;height:63px;background:#d8d8d8"></div>
<div class="t" style="left:1119px;top:379px;font-size:14.6px;color:#333;letter-spacing:0px">Period End</div>
<div class="kb" style="left:1417px;top:381px"><i style="background:#333"></i><i style="background:#333"></i><i style="background:#333"></i></div>
<div class="t" style="left:1119px;top:411px;font-size:12px;color:#333">08/15/2021</div>
<div class="a" style="left:1430px;top:371px;width:1px;height:63px;background:#d8d8d8"></div>
<div class="t" style="left:1438px;top:379px;font-size:14.6px;color:#333;letter-spacing:0px">Status</div>
<div class="kb" style="left:1654px;top:381px"><i style="background:#333"></i><i style="background:#333"></i><i style="background:#333"></i></div>
<div class="t" style="left:1438px;top:411px;font-size:12px;color:#333">Open</div>
<div class="a" style="left:1667px;top:371px;width:1px;height:63px;background:#d8d8d8"></div>
<div class="t" style="left:1675px;top:379px;font-size:14.6px;color:#333;letter-spacing:0px">Batch Options</div>
<div class="kb" style="left:1790px;top:381px"><i style="background:#333"></i><i style="background:#333"></i><i style="background:#333"></i></div>
<div class="a" style="left:1677px;top:409px;width:30px;height:18px;border:1px solid #adadad;border-radius:3px;background:linear-gradient(#f2f2f2,#e4e4e4)"><svg class="a" style="left:8px;top:3px" width="12" height="12" viewBox="0 0 12 12"><path d="M5,0.5 H7 V5 H11.5 V7 H7 V11.5 H5 V7 H0.5 V5 H5 Z" fill="#222"/></svg></div>
<div class="a" style="left:1714px;top:409px;width:30px;height:18px;border:1px solid #adadad;border-radius:3px;background:linear-gradient(#f2f2f2,#e4e4e4)"><svg class="a" style="left:8px;top:2px" width="12" height="13" viewBox="0 0 12 13"><circle cx="6" cy="6.5" r="3.3" fill="none" stroke="#8f8f8f" stroke-width="2.2"/><rect x="5.1" y="1.2" width="1.8" height="2.4" fill="#8f8f8f" transform="rotate(0 6 6.5)"/><rect x="5.1" y="1.2" width="1.8" height="2.4" fill="#8f8f8f" transform="rotate(45 6 6.5)"/><rect x="5.1" y="1.2" width="1.8" height="2.4" fill="#8f8f8f" transform="rotate(90 6 6.5)"/><rect x="5.1" y="1.2" width="1.8" height="2.4" fill="#8f8f8f" transform="rotate(135 6 6.5)"/><rect x="5.1" y="1.2" width="1.8" height="2.4" fill="#8f8f8f" transform="rotate(180 6 6.5)"/><rect x="5.1" y="1.2" width="1.8" height="2.4" fill="#8f8f8f" transform="rotate(225 6 6.5)"/><rect x="5.1" y="1.2" width="1.8" height="2.4" fill="#8f8f8f" transform="rotate(270 6 6.5)"/><rect x="5.1" y="1.2" width="1.8" height="2.4" fill="#8f8f8f" transform="rotate(315 6 6.5)"/><circle cx="6" cy="6.5" r="1.2" fill="#2a2a2a"/></svg></div>
<div class="a" style="left:1751px;top:409px;width:30px;height:18px;border:1px solid #adadad;border-radius:3px;background:linear-gradient(#f2f2f2,#e4e4e4)"><svg class="a" style="left:9px;top:3px" width="11" height="11" viewBox="0 0 11 11"><path d="M1,1 L10,10 M10,1 L1,10" stroke="#111" stroke-width="2.2"/></svg></div>
<div class="a" style="left:1664px;top:366px;width:144px;height:73px;border:5px solid #e8141e"></div>
<div class="a" style="left:65px;top:447px;width:1738px;height:42px;background:#ebe9ea;border:1px solid #d6d6d6;border-bottom:2px solid #d2d2d2"></div>
<div class="a" style="left:65px;top:489px;width:1738px;height:36px;border-left:1px solid #d6d6d6;border-right:1px solid #d6d6d6"></div>
<div class="a" style="left:74px;top:455px;width:13px;height:13px;border-radius:2px;background:#1a73e8"><svg class="a" style="left:1px;top:1px" width="11" height="11" viewBox="0 0 11 11"><path d="M1.8,5.6 L4.4,8.2 L9.4,2.6" fill="none" stroke="#fff" stroke-width="1.9"/></svg></div>
<div class="t" style="left:90px;top:457px;font-size:12px;color:#333">View All Employee Batches</div>
<div class="btn" style="left:246px;top:452px;width:84px;height:26px;line-height:24px">Add Column</div>
<div class="t" style="left:345px;top:453px;font-size:12px;color:#333">Sort Order: <b style="color:#222">Hours (Earning), Sick Amount (Earning), Employee Name</b></div>
<div class="btn" style="left:737px;top:448px;width:72px;height:25px;line-height:21px">Clear Sort</div>
<div class="a" style="left:813px;top:455px;width:13px;height:13px;border-radius:2px;background:#fff;border:1px solid #767676"></div>
<div class="t" style="left:832px;top:457px;font-size:12px;color:#333">Auto Collapse Check Detail</div>
<div class="a" style="left:985px;top:455px;width:13px;height:13px;border-radius:2px;background:#1a73e8"><svg class="a" style="left:1px;top:1px" width="11" height="11" viewBox="0 0 11 11"><path d="M1.8,5.6 L4.4,8.2 L9.4,2.6" fill="none" stroke="#fff" stroke-width="1.9"/></svg></div>
<div class="t" style="left:1004px;top:457px;font-size:12px;color:#333">Auto Save Edit Payment Details</div>
<div class="btn" style="left:1176px;top:454px;width:110px;height:27px;line-height:25px">Add Employee(s)</div>
<div class="t" style="left:1308px;top:458px;font-size:12px;color:#333">Note: performance will be decreased as grid contains total column(s)</div>
<div class="a" style="left:70px;top:495px;width:23px;height:23px;border-radius:50%;border:1px solid #d9d9d9;background:transparent"><svg class="a" style="left:6px;top:6px" width="10" height="10" viewBox="0 0 10 10"><rect x="1" y="1" width="1.5" height="8" fill="#999"/><path d="M9,1 L3,5 L9,9 Z" fill="#999"/></svg></div>
<div class="a" style="left:97px;top:495px;width:23px;height:23px;border-radius:50%;border:1px solid #d9d9d9;background:transparent"><svg class="a" style="left:7px;top:6px" width="10" height="10" viewBox="0 0 10 10"><path d="M8,1 L2,5 L8,9 Z" fill="#999"/></svg></div>
<div class="a" style="left:122px;top:495px;width:23px;height:23px;border-radius:50%;background:linear-gradient(#f37434,#ee5a20);color:#fff;font-size:12px;font-weight:bold;text-align:center;line-height:23px">1</div>
<div class="t" style="left:155px;top:501px;font-size:11px;color:#333">2</div>
<div class="a" style="left:173px;top:495px;width:23px;height:23px;border-radius:50%;border:1px solid #d9d9d9;background:transparent"><svg class="a" style="left:6px;top:6px" width="10" height="10" viewBox="0 0 10 10"><path d="M2,1 L8,5 L2,9 Z" fill="#222"/></svg></div>
<div class="a" style="left:199px;top:495px;width:23px;height:23px;border-radius:50%;border:1px solid #d9d9d9;background:transparent"><svg class="a" style="left:6px;top:6px" width="10" height="10" viewBox="0 0 10 10"><path d="M1,1 L7,5 L1,9 Z" fill="#222"/><rect x="7.5" y="1" width="1.5" height="8" fill="#222"/></svg></div>
<div class="a" style="left:234px;top:496px;width:48px;height:22px;border:1px solid #c8c8c8;border-radius:3px;background:linear-gradient(#f4f4f4,#ececec)"><span class="t" style="left:7px;top:4px;font-size:11px;color:#222">100</span><svg class="a" style="left:31px;top:8px" width="9" height="7" viewBox="0 0 9 7"><path d="M0,0 L9,0 L4.5,7 Z" fill="#222"/></svg></div>
<div class="t" style="left:287px;top:501px;font-size:11px;color:#333">items per page</div>
<div class="t" style="left:390px;top:499px;font-size:10.5px;color:#333">Filter:</div>
<div class="a" style="left:420px;top:496px;width:160px;height:22px;border:1px solid #cfcfcf;border-radius:3px;background:#fff"><span class="t" style="left:6px;top:5px;font-size:11px;color:#757575">Filter by id, name or dept</span></div>
<div class="btn" style="left:584px;top:495px;width:55px;height:24px;line-height:23px;font-size:11px">Apply</div>
<div class="btn" style="left:646px;top:495px;width:55px;height:24px;line-height:23px;font-size:11px">Reset</div>
<div class="t" style="left:1653px;top:501px;font-size:11px;color:#333">1 - 100 of 142 items</div>
<div class="a" style="left:1760px;top:491px;width:42px;height:32px;border-radius:50%;background:#e8e6e7"></div>
<svg class="a" style="left:1776px;top:498px" width="18" height="18" viewBox="0 0 18 18"><path d="M13.2,4.5 A6,6 0 1 0 15,9" fill="none" stroke="#222" stroke-width="1.8"/><path d="M10.5,2 L15.5,1.5 L14.5,6.5 Z" fill="#222"/></svg>
<div id="datagrid">
<div class="a" style="left:65px;top:525px;width:1738px;height:31.600000000000023px;background:#ebe9ea;border-bottom:1px solid #c9c9c9"></div>
<div class="a" style="left:1400px;top:525px;width:100px;height:30.600000000000023px;background:#e3eef6"></div>
<div class="a" style="left:1702px;top:525px;width:100px;height:30.600000000000023px;background:#e3eef6"></div>
<div class="a" style="left:65px;top:556.6px;width:1738px;height:50.5px;background:linear-gradient(#f47736,#ef5820)"></div>
<div class="a" style="left:65px;top:607.1px;width:1738px;height:50.5px;background:#f0f0f0"></div>
<div class="a" style="left:65px;top:657.6px;width:1738px;height:50.5px;background:#ffffff"></div>
<div class="a" style="left:65px;top:708.1px;width:1738px;height:50.5px;background:#f0f0f0"></div>
<div class="a" style="left:65px;top:758.6px;width:1738px;height:50.5px;background:#ffffff"></div>
<div class="a" style="left:93px;top:525px;width:1px;height:283px;background:#cdcdcd;opacity:.85"></div>
<div class="a" style="left:224px;top:525px;width:1px;height:283px;background:#cdcdcd;opacity:.85"></div>
<div class="a" style="left:285px;top:525px;width:1px;height:283px;background:#cdcdcd;opacity:.85"></div>
<div class="a" style="left:355px;top:525px;width:1px;height:283px;background:#cdcdcd;opacity:.85"></div>
<div class="a" style="left:491px;top:525px;width:1px;height:283px;background:#cdcdcd;opacity:.85"></div>
<div class="a" style="left:562px;top:525px;width:1px;height:283px;background:#cdcdcd;opacity:.85"></div>
<div class="a" style="left:693px;top:525px;width:1px;height:283px;background:#cdcdcd;opacity:.85"></div>
<div class="a" style="left:794px;top:525px;width:1px;height:283px;background:#cdcdcd;opacity:.85"></div>
<div class="a" style="left:895px;top:525px;width:1px;height:283px;background:#cdcdcd;opacity:.85"></div>
<div class="a" style="left:996px;top:525px;width:1px;height:283px;background:#cdcdcd;opacity:.85"></div>
<div class="a" style="left:1096px;top:525px;width:1px;height:283px;background:#cdcdcd;opacity:.85"></div>
<div class="a" style="left:1197px;top:525px;width:1px;height:283px;background:#cdcdcd;opacity:.85"></div>
<div class="a" style="left:1298px;top:525px;width:1px;height:283px;background:#cdcdcd;opacity:.85"></div>
<div class="a" style="left:1399px;top:525px;width:1px;height:283px;background:#cdcdcd;opacity:.85"></div>
<div class="a" style="left:1500px;top:525px;width:1px;height:283px;background:#cdcdcd;opacity:.85"></div>
<div class="a" style="left:1600px;top:525px;width:1px;height:283px;background:#cdcdcd;opacity:.85"></div>
<div class="a" style="left:1701px;top:525px;width:1px;height:283px;background:#cdcdcd;opacity:.85"></div>
<div class="a" style="left:1399px;top:556.6px;width:101px;height:50.5px;background:#e5f0f7;border:1px solid #fff"></div>
<div class="a" style="left:1701px;top:556.6px;width:101px;height:50.5px;background:#e5f0f7;border:1px solid #fff"></div>
<div class="a" style="left:1399px;top:607.1px;width:101px;height:50.5px;background:#e5f0f7;border:1px solid #fff"></div>
<div class="a" style="left:1701px;top:607.1px;width:101px;height:50.5px;background:#e5f0f7;border:1px solid #fff"></div>
<div class="a" style="left:1399px;top:657.6px;width:101px;height:50.5px;background:#e5f0f7;border:1px solid #fff"></div>
<div class="a" style="left:1701px;top:657.6px;width:101px;height:50.5px;background:#e5f0f7;border:1px solid #fff"></div>
<div class="a" style="left:1399px;top:708.1px;width:101px;height:50.5px;background:#e5f0f7;border:1px solid #fff"></div>
<div class="a" style="left:1701px;top:708.1px;width:101px;height:50.5px;background:#e5f0f7;border:1px solid #fff"></div>
<div class="a" style="left:1399px;top:758.6px;width:101px;height:50.5px;background:#e5f0f7;border:1px solid #fff"></div>
<div class="a" style="left:1701px;top:758.6px;width:101px;height:50.5px;background:#e5f0f7;border:1px solid #fff"></div>
<div class="a" style="left:65px;top:525px;width:1px;height:283px;background:#cfcfcf"></div>
<div class="a" style="left:1802px;top:525px;width:1px;height:283px;background:#cfcfcf"></div>
<div class="t" style="left:119.6px;top:535.0px;font-size:12px;color:#333">Batch</div>
<div class="kb" style="left:211px;top:534px"><i style="background:#333"></i><i style="background:#333"></i><i style="background:#333"></i></div>
<div class="t" style="left:250.2px;top:535.0px;font-size:12px;color:#333">D</div>
<div class="kb" style="left:272px;top:534px"><i style="background:#333"></i><i style="background:#333"></i><i style="background:#333"></i></div>
<div class="t" style="left:310.3px;top:535.0px;font-size:12px;color:#333">Id</div>
<div class="kb" style="left:342px;top:534px"><i style="background:#333"></i><i style="background:#333"></i><i style="background:#333"></i></div>
<div class="t" style="left:381.5px;top:535.0px;font-size:12px;color:#333">Name</div>
<div class="kb" style="left:478px;top:534px"><i style="background:#333"></i><i style="background:#333"></i><i style="background:#333"></i></div>
<svg class="a" style="left:423px;top:536px" width="8" height="12" viewBox="0 0 8 12"><path d="M4,0.5 L7.3,4.2 L4.6,4.2 L4.6,11.5 L3.4,11.5 L3.4,4.2 L0.7,4.2 Z" fill="#222"/></svg>
<div class="t" style="left:517.3px;top:535.0px;font-size:12px;color:#333">F...</div>
<div class="kb" style="left:549px;top:534px"><i style="background:#333"></i><i style="background:#333"></i><i style="background:#333"></i></div>
<div class="t" style="left:588px;top:535.0px;font-size:12px;color:#333">Autopay</div>
<div class="kb" style="left:680px;top:534px"><i style="background:#333"></i><i style="background:#333"></i><i style="background:#333"></i></div>
<div class="t" style="left:719.3px;top:534.5px;font-size:12px;color:#333">BO</div>
<div class="kb" style="left:781px;top:534px"><i style="background:#333"></i><i style="background:#333"></i><i style="background:#333"></i></div>
<svg class="a" style="left:703px;top:528px" width="13" height="13" viewBox="0 0 13 13"><circle cx="6.5" cy="6.5" r="5.6" fill="none" stroke="#4a5560" stroke-width="1.3"/><path d="M6.5,3 L6.5,6.8 L8.8,8.8" fill="none" stroke="#3a9ad9" stroke-width="1.2"/></svg>
<svg class="a" style="left:746.5px;top:536.5px" width="8" height="12" viewBox="0 0 8 12"><path d="M4,11.5 L7.3,7.8 L4.6,7.8 L4.6,0.5 L3.4,0.5 L3.4,7.8 L0.7,7.8 Z" fill="#222"/></svg>
<div class="t" style="left:820px;top:534.5px;font-size:12px;color:#333">Mileage</div>
<div class="kb" style="left:882px;top:534px"><i style="background:#333"></i><i style="background:#333"></i><i style="background:#333"></i></div>
<svg class="a" style="left:807px;top:529.3px" width="9" height="13" viewBox="0 0 9 13"><path d="M7.3,3.6 C6.6,2.4 5.5,2 4.4,2 C2.8,2 1.7,2.9 1.7,4.1 C1.7,5.6 3,6 4.6,6.5 C6.3,7 7.5,7.6 7.5,9.1 C7.5,10.4 6.3,11.2 4.5,11.2 C3.1,11.2 1.9,10.7 1.2,9.6" fill="none" stroke="#3d9ad8" stroke-width="2.1"/><path d="M4.5,0 V2.5 M4.5,10.8 V13" stroke="#3d9ad8" stroke-width="1.8"/></svg>
<div class="t" style="left:921px;top:534.5px;font-size:12px;color:#333">Reg</div>
<div class="kb" style="left:983px;top:534px"><i style="background:#333"></i><i style="background:#333"></i><i style="background:#333"></i></div>
<svg class="a" style="left:905px;top:528px" width="13" height="13" viewBox="0 0 13 13"><circle cx="6.5" cy="6.5" r="5.6" fill="none" stroke="#4a5560" stroke-width="1.3"/><path d="M6.5,3 L6.5,6.8 L8.8,8.8" fill="none" stroke="#3a9ad9" stroke-width="1.2"/></svg>
<div class="t" style="left:1021.4px;top:534.5px;font-size:12px;color:#333">Reg</div>
<div class="kb" style="left:1083px;top:534px"><i style="background:#333"></i><i style="background:#333"></i><i style="background:#333"></i></div>
<svg class="a" style="left:1009px;top:529.3px" width="9" height="13" viewBox="0 0 9 13"><path d="M7.3,3.6 C6.6,2.4 5.5,2 4.4,2 C2.8,2 1.7,2.9 1.7,4.1 C1.7,5.6 3,6 4.6,6.5 C6.3,7 7.5,7.6 7.5,9.1 C7.5,10.4 6.3,11.2 4.5,11.2 C3.1,11.2 1.9,10.7 1.2,9.6" fill="none" stroke="#3d9ad8" stroke-width="2.1"/><path d="M4.5,0 V2.5 M4.5,10.8 V13" stroke="#3d9ad8" stroke-width="1.8"/></svg>
<div class="t" style="left:1122.5px;top:534.5px;font-size:12px;color:#333">PTO</div>
<div class="kb" style="left:1184px;top:534px"><i style="background:#333"></i><i style="background:#333"></i><i style="background:#333"></i></div>
<svg class="a" style="left:1106px;top:528px" width="13" height="13" viewBox="0 0 13 13"><circle cx="6.5" cy="6.5" r="5.6" fill="none" stroke="#4a5560" stroke-width="1.3"/><path d="M6.5,3 L6.5,6.8 L8.8,8.8" fill="none" stroke="#3a9ad9" stroke-width="1.2"/></svg>
<div class="t" style="left:1223px;top:534.5px;font-size:12px;color:#333">OT</div>
<div class="kb" style="left:1285px;top:534px"><i style="background:#333"></i><i style="background:#333"></i><i style="background:#333"></i></div>
<svg class="a" style="left:1207px;top:528px" width="13" height="13" viewBox="0 0 13 13"><circle cx="6.5" cy="6.5" r="5.6" fill="none" stroke="#4a5560" stroke-width="1.3"/><path d="M6.5,3 L6.5,6.8 L8.8,8.8" fill="none" stroke="#3a9ad9" stroke-width="1.2"/></svg>
<div class="t" style="left:1324px;top:534.5px;font-size:12px;color:#333">Sick...</div>
<div class="kb" style="left:1386px;top:534px"><i style="background:#333"></i><i style="background:#333"></i><i style="background:#333"></i></div>
<svg class="a" style="left:1311px;top:529.3px" width="9" height="13" viewBox="0 0 9 13"><path d="M7.3,3.6 C6.6,2.4 5.5,2 4.4,2 C2.8,2 1.7,2.9 1.7,4.1 C1.7,5.6 3,6 4.6,6.5 C6.3,7 7.5,7.6 7.5,9.1 C7.5,10.4 6.3,11.2 4.5,11.2 C3.1,11.2 1.9,10.7 1.2,9.6" fill="none" stroke="#3d9ad8" stroke-width="2.1"/><path d="M4.5,0 V2.5 M4.5,10.8 V13" stroke="#3d9ad8" stroke-width="1.8"/></svg>
<svg class="a" style="left:1356px;top:536px" width="8" height="12" viewBox="0 0 8 12"><path d="M4,11.5 L7.3,7.8 L4.6,7.8 L4.6,0.5 L3.4,0.5 L3.4,7.8 L0.7,7.8 Z" fill="#222"/></svg>
<div class="t" style="left:1425px;top:534.5px;font-size:12px;color:#333">Net</div>
<div class="kb" style="left:1487px;top:534px"><i style="background:#333"></i><i style="background:#333"></i><i style="background:#333"></i></div>
<svg class="a" style="left:1412px;top:529.3px" width="9" height="13" viewBox="0 0 9 13"><path d="M7.3,3.6 C6.6,2.4 5.5,2 4.4,2 C2.8,2 1.7,2.9 1.7,4.1 C1.7,5.6 3,6 4.6,6.5 C6.3,7 7.5,7.6 7.5,9.1 C7.5,10.4 6.3,11.2 4.5,11.2 C3.1,11.2 1.9,10.7 1.2,9.6" fill="none" stroke="#3d9ad8" stroke-width="2.1"/><path d="M4.5,0 V2.5 M4.5,10.8 V13" stroke="#3d9ad8" stroke-width="1.8"/></svg>
<div class="t" style="left:1525px;top:534.5px;font-size:12px;color:#333">Shift...</div>
<div class="kb" style="left:1587px;top:534px"><i style="background:#333"></i><i style="background:#333"></i><i style="background:#333"></i></div>
<svg class="a" style="left:1513px;top:529.3px" width="9" height="13" viewBox="0 0 9 13"><path d="M7.3,3.6 C6.6,2.4 5.5,2 4.4,2 C2.8,2 1.7,2.9 1.7,4.1 C1.7,5.6 3,6 4.6,6.5 C6.3,7 7.5,7.6 7.5,9.1 C7.5,10.4 6.3,11.2 4.5,11.2 C3.1,11.2 1.9,10.7 1.2,9.6" fill="none" stroke="#3d9ad8" stroke-width="2.1"/><path d="M4.5,0 V2.5 M4.5,10.8 V13" stroke="#3d9ad8" stroke-width="1.8"/></svg>
<div class="t" style="left:1626px;top:534.5px;font-size:12px;color:#333">Tips</div>
<div class="kb" style="left:1688px;top:534px"><i style="background:#333"></i><i style="background:#333"></i><i style="background:#333"></i></div>
<svg class="a" style="left:1613px;top:529.3px" width="9" height="13" viewBox="0 0 9 13"><path d="M7.3,3.6 C6.6,2.4 5.5,2 4.4,2 C2.8,2 1.7,2.9 1.7,4.1 C1.7,5.6 3,6 4.6,6.5 C6.3,7 7.5,7.6 7.5,9.1 C7.5,10.4 6.3,11.2 4.5,11.2 C3.1,11.2 1.9,10.7 1.2,9.6" fill="none" stroke="#3d9ad8" stroke-width="2.1"/><path d="M4.5,0 V2.5 M4.5,10.8 V13" stroke="#3d9ad8" stroke-width="1.8"/></svg>
<div class="t" style="left:1727.6px;top:534.5px;font-size:12px;color:#333">Gross</div>
<div class="kb" style="left:1789px;top:534px"><i style="background:#333"></i><i style="background:#333"></i><i style="background:#333"></i></div>
<svg class="a" style="left:1714px;top:529.3px" width="9" height="13" viewBox="0 0 9 13"><path d="M7.3,3.6 C6.6,2.4 5.5,2 4.4,2 C2.8,2 1.7,2.9 1.7,4.1 C1.7,5.6 3,6 4.6,6.5 C6.3,7 7.5,7.6 7.5,9.1 C7.5,10.4 6.3,11.2 4.5,11.2 C3.1,11.2 1.9,10.7 1.2,9.6" fill="none" stroke="#3d9ad8" stroke-width="2.1"/><path d="M4.5,0 V2.5 M4.5,10.8 V13" stroke="#3d9ad8" stroke-width="1.8"/></svg>
<svg class="a" style="left:77.5px;top:567.4px" width="8" height="9" viewBox="0 0 8 9"><path d="M0.8,0.6 L6.8,4.5 L0.8,8.4 Z" fill="#fff"/></svg>
<div class="a" style="left:106px;top:563.2px;width:30px;height:18px;border:1px solid #b0b0b0;border-radius:4px;background:linear-gradient(#f5f5f5,#e8e8e8)"><svg class="a" style="left:7px;top:3px" width="16" height="10" viewBox="0 0 16 10"><path d="M1,5 C4,0.5 12,0.5 15,5 C12,9.5 4,9.5 1,5 Z" fill="#9a9a9a"/><circle cx="8" cy="5" r="2.8" fill="#fff"/><circle cx="8" cy="5" r="2" fill="#222"/></svg></div>
<div class="a" style="left:143px;top:563.2px;width:30px;height:18px;border:1px solid #b0b0b0;border-radius:4px;background:linear-gradient(#f5f5f5,#e8e8e8)"><svg class="a" style="left:9px;top:3px" width="12" height="11" viewBox="0 0 12 11"><rect x="0.5" y="4.5" width="11" height="2" fill="#333"/><rect x="5.2" y="0.5" width="1.6" height="10" fill="#777"/></svg></div>
<div class="a" style="left:181px;top:563.2px;width:30px;height:18px;border:1px solid #b0b0b0;border-radius:4px;background:linear-gradient(#f5f5f5,#e8e8e8)"><svg class="a" style="left:9px;top:3px" width="11" height="11" viewBox="0 0 11 11"><path d="M1.5,1.5 L9.5,9.5" stroke="#222" stroke-width="1.8"/><path d="M9.5,1.5 L1.5,9.5" stroke="#888" stroke-width="1.5"/></svg></div>
<div class="t" style="left:102px;top:585.1px;font-size:12px;color:#fff">SM2</div>
<div class="t" style="left:233px;top:574.1px;font-size:12px;color:#fff">100</div>
<div class="t" style="right:1552.4px;top:574.1px;font-size:12px;color:#fff">CM1011</div>
<div class="t" style="right:1415.6px;top:574.1px;font-size:12px;color:#fff">Barrera, Eder</div>
<div class="t" style="right:1345.5px;top:574.1px;font-size:12px;color:#fff">Eder</div>
<div class="a" style="left:574px;top:573.6px;width:13px;height:13px;border-radius:2px;background:#1a73e8;border:1px solid #fff"><svg class="a" style="left:0px;top:0px" width="11" height="11" viewBox="0 0 11 11"><path d="M1.8,5.6 L4.4,8.2 L9.4,2.6" fill="none" stroke="#fff" stroke-width="1.9"/></svg></div>
<div class="t" style="left:593.5px;top:576.1px;font-size:12px;color:#fff">Pay $1,000.00</div>
<div class="t" style="right:1114.0px;top:574.1px;font-size:12px;color:#fff">0.00</div>
<div class="t" style="right:1013.0px;top:574.1px;font-size:12px;color:#fff">$0.00</div>
<div class="t" style="right:912.0px;top:574.1px;font-size:12px;color:#fff">0.00</div>
<div class="t" style="right:812.0px;top:574.1px;font-size:12px;color:#fff">$0.00</div>
<div class="t" style="right:711.0px;top:574.1px;font-size:12px;color:#fff">0.00</div>
<div class="t" style="right:610.0px;top:574.1px;font-size:12px;color:#fff">0.00</div>
<div class="t" style="right:509.0px;top:574.1px;font-size:12px;color:#fff">$0.00</div>
<div class="t" style="right:408.0px;top:574.1px;font-size:12px;color:#333">$911.50</div>
<div class="t" style="right:308.0px;top:574.1px;font-size:12px;color:#fff">$0.00</div>
<div class="t" style="right:207.0px;top:574.1px;font-size:12px;color:#fff">$0.00</div>
<div class="t" style="right:106.0px;top:574.1px;font-size:12px;color:#333">$1,000.00</div>
<svg class="a" style="left:77.5px;top:617.9px" width="8" height="9" viewBox="0 0 8 9"><path d="M0.8,0.6 L6.8,4.5 L0.8,8.4 Z" fill="#222"/></svg>
<div class="a" style="left:106px;top:613.7px;width:30px;height:18px;border:1px solid #b0b0b0;border-radius:4px;background:linear-gradient(#f5f5f5,#e8e8e8)"><svg class="a" style="left:7px;top:3px" width="16" height="10" viewBox="0 0 16 10"><path d="M1,5 C4,0.5 12,0.5 15,5 C12,9.5 4,9.5 1,5 Z" fill="#9a9a9a"/><circle cx="8" cy="5" r="2.8" fill="#fff"/><circle cx="8" cy="5" r="2" fill="#222"/></svg></div>
<div class="a" style="left:143px;top:613.7px;width:30px;height:18px;border:1px solid #b0b0b0;border-radius:4px;background:linear-gradient(#f5f5f5,#e8e8e8)"><svg class="a" style="left:9px;top:3px" width="12" height="11" viewBox="0 0 12 11"><rect x="0.5" y="4.5" width="11" height="2" fill="#333"/><rect x="5.2" y="0.5" width="1.6" height="10" fill="#777"/></svg></div>
<div class="a" style="left:181px;top:613.7px;width:30px;height:18px;border:1px solid #b0b0b0;border-radius:4px;background:linear-gradient(#f5f5f5,#e8e8e8)"><svg class="a" style="left:9px;top:3px" width="11" height="11" viewBox="0 0 11 11"><path d="M1.5,1.5 L9.5,9.5" stroke="#222" stroke-width="1.8"/><path d="M9.5,1.5 L1.5,9.5" stroke="#888" stroke-width="1.5"/></svg></div>
<div class="t" style="left:102px;top:635.6px;font-size:12px;color:#333">SM2</div>
<div class="t" style="left:233px;top:624.6px;font-size:12px;color:#333">100</div>
<div class="t" style="right:1552.4px;top:624.6px;font-size:12px;color:#333">1001</div>
<div class="t" style="right:1415.6px;top:624.6px;font-size:12px;color:#333">Beckham, David</div>
<svg class="a" id="doc1" style="left:382px;top:624.9px" width="10" height="12" viewBox="0 0 10 12"><path d="M0.5,0.5 L6,0.5 L9.5,4 L9.5,11.5 L0.5,11.5 Z" fill="#222"/><path d="M6,0.5 L6,4 L9.5,4" fill="#ccc"/><rect x="2.3" y="6.5" width="5.4" height="1" fill="#eee"/><rect x="2.3" y="8.3" width="5.4" height="1" fill="#eee"/></svg>
<div class="t" style="right:1345.5px;top:624.6px;font-size:12px;color:#333">David</div>
<div class="a" style="left:574px;top:623.5px;width:13px;height:13px;border-radius:2px;background:#f7f7f7;border:1px solid #cfcfcf"></div>
<div class="t" style="right:1114.0px;top:624.6px;font-size:12px;color:#333">0.00</div>
<div class="t" style="right:1013.0px;top:624.6px;font-size:12px;color:#333">$0.00</div>
<div class="t" style="right:912.0px;top:624.6px;font-size:12px;color:#333">0.00</div>
<div class="t" style="right:812.0px;top:624.6px;font-size:12px;color:#333">$0.00</div>
<div class="t" style="right:711.0px;top:624.6px;font-size:12px;color:#333">0.00</div>
<div class="t" style="right:610.0px;top:624.6px;font-size:12px;color:#333">0.00</div>
<div class="t" style="right:509.0px;top:624.6px;font-size:12px;color:#333">$0.00</div>
<div class="t" style="right:408.0px;top:624.6px;font-size:12px;color:#333">$126.30</div>
<div class="t" style="right:308.0px;top:624.6px;font-size:12px;color:#333">$0.00</div>
<div class="t" style="right:207.0px;top:624.6px;font-size:12px;color:#333">$0.00</div>
<div class="t" style="right:106.0px;top:624.6px;font-size:12px;color:#333">$200.00</div>
<svg class="a" style="left:77.5px;top:668.4px" width="8" height="9" viewBox="0 0 8 9"><path d="M0.8,0.6 L6.8,4.5 L0.8,8.4 Z" fill="#222"/></svg>
<div class="a" style="left:106px;top:664.2px;width:30px;height:18px;border:1px solid #b0b0b0;border-radius:4px;background:linear-gradient(#f5f5f5,#e8e8e8)"><svg class="a" style="left:7px;top:3px" width="16" height="10" viewBox="0 0 16 10"><path d="M1,5 C4,0.5 12,0.5 15,5 C12,9.5 4,9.5 1,5 Z" fill="#9a9a9a"/><circle cx="8" cy="5" r="2.8" fill="#fff"/><circle cx="8" cy="5" r="2" fill="#222"/></svg></div>
<div class="a" style="left:143px;top:664.2px;width:30px;height:18px;border:1px solid #b0b0b0;border-radius:4px;background:linear-gradient(#f5f5f5,#e8e8e8)"><svg class="a" style="left:9px;top:3px" width="12" height="11" viewBox="0 0 12 11"><rect x="0.5" y="4.5" width="11" height="2" fill="#333"/><rect x="5.2" y="0.5" width="1.6" height="10" fill="#777"/></svg></div>
<div class="a" style="left:181px;top:664.2px;width:30px;height:18px;border:1px solid #b0b0b0;border-radius:4px;background:linear-gradient(#f5f5f5,#e8e8e8)"><svg class="a" style="left:9px;top:3px" width="11" height="11" viewBox="0 0 11 11"><path d="M1.5,1.5 L9.5,9.5" stroke="#222" stroke-width="1.8"/><path d="M9.5,1.5 L1.5,9.5" stroke="#888" stroke-width="1.5"/></svg></div>
<div class="t" style="left:102px;top:686.1px;font-size:12px;color:#333">SM2</div>
<div class="t" style="left:233px;top:675.1px;font-size:12px;color:#333">Corp</div>
<div class="t" style="right:1552.4px;top:675.1px;font-size:12px;color:#333">RH1549</div>
<div class="t" style="right:1415.6px;top:675.1px;font-size:12px;color:#333">Beesly, Pamela</div>
<div class="t" style="right:1345.5px;top:675.1px;font-size:12px;color:#333">Pamela</div>
<div class="a" style="left:574px;top:674.0px;width:13px;height:13px;border-radius:2px;background:#f7f7f7;border:1px solid #cfcfcf"></div>
<div class="t" style="right:1114.0px;top:675.1px;font-size:12px;color:#333">0.00</div>
<div class="t" style="right:1013.0px;top:675.1px;font-size:12px;color:#333">$0.00</div>
<div class="t" style="right:912.0px;top:675.1px;font-size:12px;color:#333">0.00</div>
<div class="t" style="right:812.0px;top:675.1px;font-size:12px;color:#333">$0.00</div>
<div class="t" style="right:711.0px;top:675.1px;font-size:12px;color:#333">0.00</div>
<div class="t" style="right:610.0px;top:675.1px;font-size:12px;color:#333">0.00</div>
<div class="t" style="right:509.0px;top:675.1px;font-size:12px;color:#333">$0.00</div>
<div class="t" style="right:408.0px;top:675.1px;font-size:12px;color:#333">$0.00</div>
<div class="t" style="right:308.0px;top:675.1px;font-size:12px;color:#333">$0.00</div>
<div class="t" style="right:207.0px;top:675.1px;font-size:12px;color:#333">$0.00</div>
<div class="t" style="right:106.0px;top:675.1px;font-size:12px;color:#333">$0.00</div>
<svg class="a" style="left:77.5px;top:718.9px" width="8" height="9" viewBox="0 0 8 9"><path d="M0.8,0.6 L6.8,4.5 L0.8,8.4 Z" fill="#222"/></svg>
<div class="a" style="left:106px;top:714.7px;width:30px;height:18px;border:1px solid #b0b0b0;border-radius:4px;background:linear-gradient(#f5f5f5,#e8e8e8)"><svg class="a" style="left:7px;top:3px" width="16" height="10" viewBox="0 0 16 10"><path d="M1,5 C4,0.5 12,0.5 15,5 C12,9.5 4,9.5 1,5 Z" fill="#9a9a9a"/><circle cx="8" cy="5" r="2.8" fill="#fff"/><circle cx="8" cy="5" r="2" fill="#222"/></svg></div>
<div class="a" style="left:143px;top:714.7px;width:30px;height:18px;border:1px solid #b0b0b0;border-radius:4px;background:linear-gradient(#f5f5f5,#e8e8e8)"><svg class="a" style="left:9px;top:3px" width="12" height="11" viewBox="0 0 12 11"><rect x="0.5" y="4.5" width="11" height="2" fill="#333"/><rect x="5.2" y="0.5" width="1.6" height="10" fill="#777"/></svg></div>
<div class="a" style="left:181px;top:714.7px;width:30px;height:18px;border:1px solid #b0b0b0;border-radius:4px;background:linear-gradient(#f5f5f5,#e8e8e8)"><svg class="a" style="left:9px;top:3px" width="11" height="11" viewBox="0 0 11 11"><path d="M1.5,1.5 L9.5,9.5" stroke="#222" stroke-width="1.8"/><path d="M9.5,1.5 L1.5,9.5" stroke="#888" stroke-width="1.5"/></svg></div>
<div class="t" style="left:102px;top:736.6px;font-size:12px;color:#333">SM2</div>
<div class="t" style="left:233px;top:725.6px;font-size:12px;color:#333">100</div>
<div class="t" style="right:1552.4px;top:725.6px;font-size:12px;color:#333">CM1557</div>
<div class="t" style="right:1415.6px;top:725.6px;font-size:12px;color:#333">Bird, Tweety</div>
<div class="t" style="right:1345.5px;top:725.6px;font-size:12px;color:#333">Tweety</div>
<div class="a" style="left:574px;top:724.5px;width:13px;height:13px;border-radius:2px;background:#f7f7f7;border:1px solid #cfcfcf"></div>
<div class="t" style="right:1114.0px;top:725.6px;font-size:12px;color:#333">0.00</div>
<div class="t" style="right:1013.0px;top:725.6px;font-size:12px;color:#333">$0.00</div>
<div class="t" style="right:912.0px;top:725.6px;font-size:12px;color:#333">0.00</div>
<div class="t" style="right:812.0px;top:725.6px;font-size:12px;color:#333">$0.00</div>
<div class="t" style="right:711.0px;top:725.6px;font-size:12px;color:#333">0.00</div>
<div class="t" style="right:610.0px;top:725.6px;font-size:12px;color:#333">0.00</div>
<div class="t" style="right:509.0px;top:725.6px;font-size:12px;color:#333">$0.00</div>
<div class="t" style="right:408.0px;top:725.6px;font-size:12px;color:#333">$0.00</div>
<div class="t" style="right:308.0px;top:725.6px;font-size:12px;color:#333">$0.00</div>
<div class="t" style="right:207.0px;top:725.6px;font-size:12px;color:#333">$0.00</div>
<div class="t" style="right:106.0px;top:725.6px;font-size:12px;color:#333">$0.00</div>
<svg class="a" style="left:77.5px;top:769.4px" width="8" height="9" viewBox="0 0 8 9"><path d="M0.8,0.6 L6.8,4.5 L0.8,8.4 Z" fill="#222"/></svg>
<div class="a" style="left:106px;top:765.2px;width:30px;height:18px;border:1px solid #b0b0b0;border-radius:4px;background:linear-gradient(#f5f5f5,#e8e8e8)"><svg class="a" style="left:7px;top:3px" width="16" height="10" viewBox="0 0 16 10"><path d="M1,5 C4,0.5 12,0.5 15,5 C12,9.5 4,9.5 1,5 Z" fill="#9a9a9a"/><circle cx="8" cy="5" r="2.8" fill="#fff"/><circle cx="8" cy="5" r="2" fill="#222"/></svg></div>
<div class="a" style="left:143px;top:765.2px;width:30px;height:18px;border:1px solid #b0b0b0;border-radius:4px;background:linear-gradient(#f5f5f5,#e8e8e8)"><svg class="a" style="left:9px;top:3px" width="12" height="11" viewBox="0 0 12 11"><rect x="0.5" y="4.5" width="11" height="2" fill="#333"/><rect x="5.2" y="0.5" width="1.6" height="10" fill="#777"/></svg></div>
<div class="a" style="left:181px;top:765.2px;width:30px;height:18px;border:1px solid #b0b0b0;border-radius:4px;background:linear-gradient(#f5f5f5,#e8e8e8)"><svg class="a" style="left:9px;top:3px" width="11" height="11" viewBox="0 0 11 11"><path d="M1.5,1.5 L9.5,9.5" stroke="#222" stroke-width="1.8"/><path d="M9.5,1.5 L1.5,9.5" stroke="#888" stroke-width="1.5"/></svg></div>
<div class="t" style="left:102px;top:787.1px;font-size:12px;color:#333">SM2</div>
<div class="t" style="left:233px;top:776.1px;font-size:12px;color:#333">Shop</div>
<div class="t" style="right:1552.4px;top:776.1px;font-size:12px;color:#333">1012</div>
<div class="t" style="right:1415.6px;top:776.1px;font-size:12px;color:#333">Brooke, Ryan</div>
<svg class="a" id="doc4" style="left:396px;top:776.4px" width="10" height="12" viewBox="0 0 10 12"><path d="M0.5,0.5 L6,0.5 L9.5,4 L9.5,11.5 L0.5,11.5 Z" fill="#222"/><path d="M6,0.5 L6,4 L9.5,4" fill="#ccc"/><rect x="2.3" y="6.5" width="5.4" height="1" fill="#eee"/><rect x="2.3" y="8.3" width="5.4" height="1" fill="#eee"/></svg>
<div class="t" style="right:1345.5px;top:776.1px;font-size:12px;color:#333">Ryan</div>
<div class="a" style="left:574px;top:775.6px;width:13px;height:13px;border-radius:2px;background:#1a73e8;border:1px solid #1a73e8"><svg class="a" style="left:0px;top:0px" width="11" height="11" viewBox="0 0 11 11"><path d="M1.8,5.6 L4.4,8.2 L9.4,2.6" fill="none" stroke="#fff" stroke-width="1.9"/></svg></div>
<div class="t" style="left:593.5px;top:778.1px;font-size:12px;color:#333">Pay $0.00</div>
<div class="t" style="right:1114.0px;top:776.1px;font-size:12px;color:#333">0.00</div>
<div class="t" style="right:1013.0px;top:776.1px;font-size:12px;color:#333">$0.00</div>
<div class="t" style="right:912.0px;top:776.1px;font-size:12px;color:#333">0.00</div>
<div class="t" style="right:812.0px;top:776.1px;font-size:12px;color:#333">$0.00</div>
<div class="t" style="right:711.0px;top:776.1px;font-size:12px;color:#333">0.00</div>
<div class="t" style="right:610.0px;top:776.1px;font-size:12px;color:#333">0.00</div>
<div class="t" style="right:509.0px;top:776.1px;font-size:12px;color:#333">$0.00</div>
<div class="t" style="right:408.0px;top:776.1px;font-size:12px;color:#333">$50.00</div>
<div class="t" style="right:308.0px;top:776.1px;font-size:12px;color:#333">$0.00</div>
<div class="t" style="right:207.0px;top:776.1px;font-size:12px;color:#333">$0.00</div>
<div class="t" style="right:106.0px;top:776.1px;font-size:12px;color:#333">$3,964.58</div>

</div>

</body></html>
